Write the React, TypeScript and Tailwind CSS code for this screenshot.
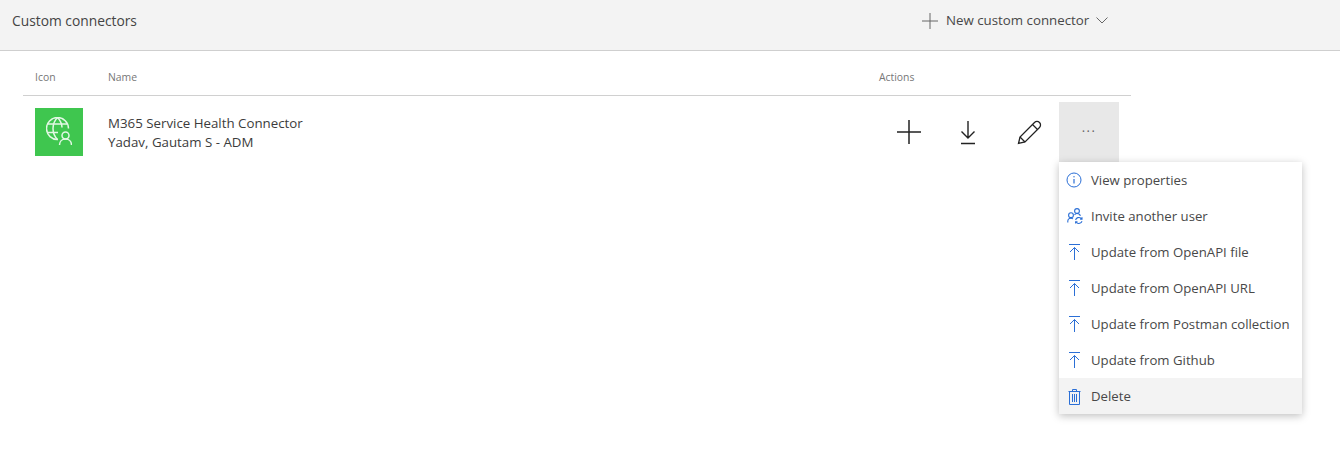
import { ReactNode } from "react";

const BLUE = "#2b6fd6";

const InfoIcon = () => (
  <svg className="-ml-[2px]" width="16" height="16" viewBox="0 0 16 16" fill="none" stroke={BLUE} strokeWidth="1">
    <circle cx="8" cy="8" r="7" />
    <path d="M8 7v4.5" strokeWidth="1.2" />
    <circle cx="8" cy="4.8" r="0.7" fill={BLUE} stroke="none" />
  </svg>
);

const InviteIcon = () => (
  <svg className="-ml-[1px]" width="16" height="16" viewBox="0 0 16 16" fill="none" stroke={BLUE} strokeWidth="1.1">
    <circle cx="10" cy="3" r="2.4" />
    <circle cx="4" cy="7.2" r="2.4" />
    <path d="M0.8 14.5v-1.2c0-1.8 1.4-3 3.2-3 .8 0 1.4.2 2 .6" />
    <path d="M7.5 6.8c.6-.8 1.5-1.3 2.5-1.3 1.6 0 3 1 3.4 2.4" />
    <path d="M8.6 12a3.4 3.4 0 0 1 5.4-1.8l1 .9M15 9.3v1.9h-1.9" />
    <path d="M15 13.2a3.4 3.4 0 0 1-5.4 1.4l-1-.9M8.6 15.6v-1.9h1.9" />
  </svg>
);

const UploadIcon = () => (
  <svg width="16" height="18" viewBox="0 0 16 18" fill="none" stroke={BLUE} strokeWidth="1">
    <path d="M2 1.5h11" />
    <path d="M7.500 17V4.500M3 9l4.500-4.500L12 9" />
  </svg>
);

const TrashIcon = () => (
  <svg width="16" height="17" viewBox="0 0 16 17" fill="none" stroke={BLUE} strokeWidth="1">
    <path d="M1.500 3.500h12M5.500 3.500V1.500h4v2" />
    <path d="M2.500 3.500v13h10v-13" />
    <path d="M5.500 6v8M7.500 6v8M9.500 6v8" />
  </svg>
);

const MenuItem = ({ icon, label, active }: { icon: ReactNode; label: string; active?: boolean }) => (
  <div className={`flex h-9 items-center ${active ? "bg-[#f3f3f3]" : ""}`}>
    <div className="flex w-8 justify-center">{icon}</div>
    <span className="pt-[2px] text-[13.2px] text-[#484848]">{label}</span>
  </div>
);

export default function App() {
  return (
    <div className="relative h-[463px] w-[1340px] overflow-hidden bg-white font-['Open_Sans',sans-serif] text-[#333]">
      <div className="flex h-[51px] items-center border-b border-[#cfcfcf] bg-[#f3f3f3] pl-3">
        <span className="w-[910px] pb-[7px] text-[13.8px] text-[#444]">Custom connectors</span>
        <div className="flex items-center pb-[9px] text-[#484848]">
          <svg width="16" height="16" viewBox="0 0 16 16" fill="none" stroke="#666" strokeWidth="1">
            <path d="M8 0v16M0 8h16" />
          </svg>
          <span className="ml-2 text-[13.3px]">New custom connector</span>
          <svg className="ml-[7px]" width="12" height="7" viewBox="0 0 12 7" fill="none" stroke="#666" strokeWidth="1">
            <path d="M.5.500 6 6l5.500-5.500" />
          </svg>
        </div>
      </div>

      <div className="ml-[23px] w-[1108px]">
        <div className="flex h-[45px] items-center border-b border-[#d0d0d0] pt-[9px] text-[10.4px] text-[#777]">
          <span className="w-[85px] pl-3">Icon</span>
          <span className="w-[771px]">Name</span>
          <span>Actions</span>
        </div>
        <div className="flex items-start">
          <div className="ml-3 mt-3 flex h-12 w-12 items-center justify-center bg-[#3fc64f] pb-[3px]">
            <svg width="26" height="28" viewBox="0 0 26 28" fill="none" stroke="#e2f7e4" strokeWidth="1.5">
              <path d="M12 22.500A11 11 0 1 1 22.500 11.500" />
              <path d="M11.500.500c-3 3-4.500 6.500-4.500 11s1.500 8 4.500 11M11.500.500c3 3 4.300 6 4.500 10" />
              <path d="M1.800 7h19.400M1.500 15.500h10.500" />
              <circle cx="19.500" cy="18.500" r="3.500" />
              <path d="M13.500 28c0-3.500 2.500-6 6-6s6 2.500 6 6" />
            </svg>
          </div>
          <div className="ml-[25px] mt-[18px] w-[771px] text-[13.3px] leading-[19px] text-[#3c3c3c]">
            <div>M365 Service Health Connector</div>
            <div>Yadav, Gautam S - ADM</div>
          </div>
          <div className="mt-[6px] flex">
            <div className="flex h-[60px] w-[60px] items-center justify-center">
              <svg width="26" height="26" viewBox="0 0 26 26" fill="none" stroke="#222" strokeWidth="1.5">
                <path d="M13 1v24M1 13h24" />
              </svg>
            </div>
            <div className="flex h-[60px] w-[60px] items-center justify-center pr-[2px]">
              <svg width="16" height="25" viewBox="0 0 16 25" fill="none" stroke="#222" strokeWidth="1.4">
                <path d="M8 1v17M1.500 11.500 8 18l6.500-6.500M1 23.500h14" />
              </svg>
            </div>
            <div className="flex h-[60px] w-[60px] items-center justify-center">
              <svg width="25" height="25" viewBox="0 0 25 25" fill="none" stroke="#222" strokeWidth="1.3">
                <path d="M1.500 23.500 3 17 17.500 2.500a2.800 2.800 0 0 1 5 5L8 22Z" />
                <path d="M3 17l5 5M15.500 4.500l5 5" />
              </svg>
            </div>
            <div className="flex h-[60px] w-[60px] items-center justify-center bg-[#e8e8e8] pb-2 text-[13px] tracking-[1.5px] text-[#666]">
              ...
            </div>
          </div>
        </div>
      </div>

      <div className="absolute left-[1059px] top-[162px] w-[243px] bg-white shadow-[0_2px_8px_rgba(0,0,0,0.25)]">
        <MenuItem icon={<InfoIcon />} label="View properties" />
        <MenuItem icon={<InviteIcon />} label="Invite another user" />
        <MenuItem icon={<UploadIcon />} label="Update from OpenAPI file" />
        <MenuItem icon={<UploadIcon />} label="Update from OpenAPI URL" />
        <MenuItem icon={<UploadIcon />} label="Update from Postman collection" />
        <MenuItem icon={<UploadIcon />} label="Update from Github" />
        <MenuItem icon={<TrashIcon />} label="Delete" active />
      </div>
    </div>
  );
}
